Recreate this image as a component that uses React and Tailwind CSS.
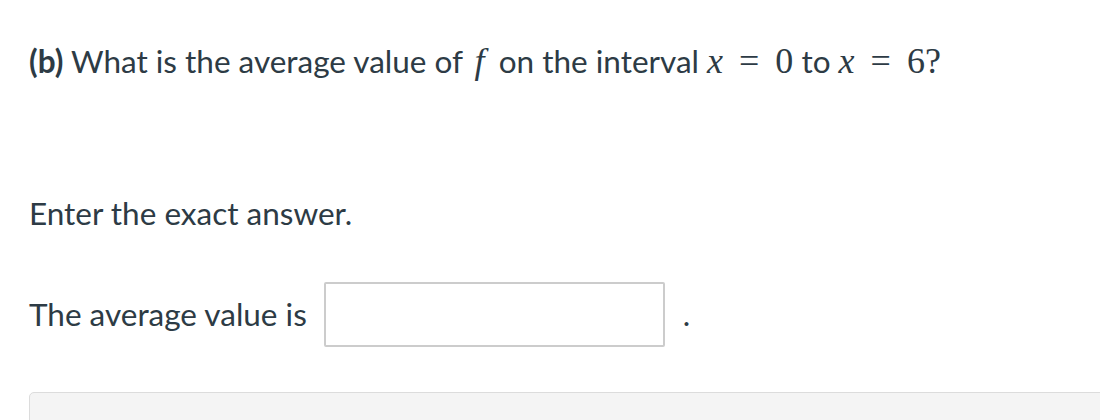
export default function App() {
  const math = { fontFamily: '"Liberation Serif", "Times New Roman", serif' };
  return (
    <div
      className="w-[1100px] h-[420px] overflow-hidden bg-white text-[#2d3b45] pl-[29px]"
      style={{ fontFamily: 'Lato, "Noto Sans", sans-serif' }}
    >
      <p className="pt-[40px] text-[31.5px] leading-[42px] whitespace-nowrap">
        <span className="font-bold">(b)</span> What is the average value of{" "}
        <span className="italic text-[36px] ml-[4px] mr-[6px]" style={math}>f</span> on the interval{" "}
        <span className="text-[36px]" style={math}>
          <span className="italic">x</span>
          <span className="mx-[16px]">=</span>0
        </span>{" "}
        to{" "}
        <span className="text-[36px]" style={math}>
          <span className="italic">x</span>
          <span className="mx-[16px]">=</span>6?
        </span>
      </p>

      <p className="mt-[110px] text-[31.5px] leading-[42px]">Enter the exact answer.</p>

      <div className="mt-[48px] flex items-center text-[31.5px]">
        <span>The average value is</span>
        <div className="ml-[17px] w-[341px] h-[65px] border-2 border-[#cccccc] rounded-[2px] bg-white" />
        <span className="ml-[18px]">.</span>
      </div>

      <div className="mt-[45px] h-[60px] w-[1100px] bg-[#f4f4f4] border border-[#dcdcdc] rounded-[5px]" />
    </div>
  );
}
